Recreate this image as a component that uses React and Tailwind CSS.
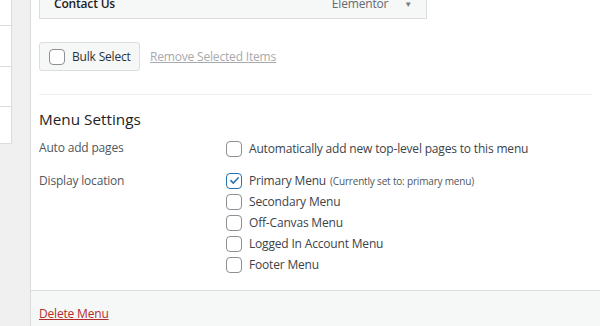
import React from 'react';

const font = { fontFamily: '"Open Sans", Lato, sans-serif' };

function Box({ checked }) {
  return (
    <span
      className={`relative inline-flex h-4 w-4 shrink-0 items-center justify-center rounded-[4px] border bg-white ${
        checked ? 'border-[#2271b1]' : 'border-[#8c8f94]'
      }`}
    >
      {checked && (
        <svg viewBox="0 0 16 16" className="h-[13px] w-[13px]">
          <path d="M3.5 8.2 L6.6 11.2 L12.5 4.8" fill="none" stroke="#2271b1" strokeWidth="1.9" strokeLinecap="round" strokeLinejoin="round" />
        </svg>
      )}
    </span>
  );
}

const locations = [
  { name: 'Primary Menu', checked: true, note: '(Currently set to: primary menu)' },
  { name: 'Secondary Menu' },
  { name: 'Off-Canvas Menu' },
  { name: 'Logged In Account Menu' },
  { name: 'Footer Menu' },
];

export default function App() {
  return (
    <div className="relative h-[326px] w-[600px] overflow-hidden bg-[#f0f0f1] text-[12px] tracking-[-0.18px] text-[#3c434a]" style={font}>
      {/* left side panel, cut off */}
      <div className="absolute left-0 top-0 h-[144px] w-[12px] border-r border-b border-[#dcdcde] bg-white">
        <div className="mt-[25px] border-t border-[#dcdcde]" />
        <div className="mt-[40px] border-t border-[#dcdcde]" />
        <div className="mt-[39px] border-t border-[#dcdcde]" />
      </div>

      <div className="ml-[30px] flex h-full flex-col border-l border-[#dcdcde] bg-white">
        <div className="px-[8px]">
          {/* menu item */}
          <div className="relative -mt-[12px] flex h-[31px] w-[388px] items-center justify-between border border-[#dcdcde] bg-[#f6f7f7] pl-[14px] pr-[14px]">
            <span className="font-semibold text-[#1d2327]">Contact Us</span>
            <span className="flex items-center gap-[16px] text-[#646970]">
              Elementor
              <span className="text-[8px] text-[#787c82]">▼</span>
            </span>
          </div>

          {/* bulk select */}
          <div className="mt-[23px] flex items-center gap-[10px]">
            <div className="flex h-[29px] w-[101px] items-center gap-[7px] rounded-[3px] border border-[#dcdcde] bg-[#f6f7f7] pl-[9px]">
              <Box />
              <span className="text-[#2c3338]">Bulk Select</span>
            </div>
            <span className="text-[#a7aaad] underline">Remove Selected Items</span>
          </div>

          <div className="mt-[23px] border-t border-[#f0f0f1]" />

          <h3 className="mt-[13px] text-[15.3px] font-medium tracking-normal text-[#1d2327]">Menu Settings</h3>

          <div className="mt-[9px] flex">
            <div className="w-[187px] leading-4 text-[#50575e]">Auto add pages</div>
            <label className="flex items-center gap-[7px]">
              <Box />
              Automatically add new top-level pages to this menu
            </label>
          </div>

          <div className="mt-[15px] flex">
            <div className="w-[187px] leading-4 text-[#50575e]">Display location</div>
            <div className="flex flex-col gap-[5px]">
              {locations.map((loc) => (
                <label key={loc.name} className="flex h-4 items-center gap-[7px]">
                  <Box checked={loc.checked} />
                  <span>
                    {loc.name}
                    {loc.note && <span className="ml-1 text-[10px] text-[#50575e]">{loc.note}</span>}
                  </span>
                </label>
              ))}
            </div>
          </div>
        </div>

        {/* footer */}
        <div className="mt-auto h-[36px] border-t border-[#dcdcde] bg-[#f6f7f7] px-[8px] pt-[14px]">
          <span className="text-[#b32d2e] underline">Delete Menu</span>
        </div>
      </div>
    </div>
  );
}
